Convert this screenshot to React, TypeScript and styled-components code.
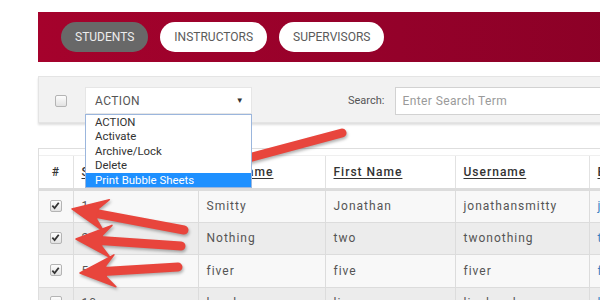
import React from 'react';
import styled, { createGlobalStyle } from 'styled-components';

const GlobalStyle = createGlobalStyle`
  html, body {
    margin: 0;
    padding: 0;
    background: #fff;
    overflow: hidden;
  }
  body {
    font-family: Roboto, 'Liberation Sans', sans-serif;
  }
`;

const Page = styled.div`
  position: relative;
  width: 760px;
  height: 300px;
  padding: 12px 0 0 38px;
  box-sizing: border-box;
`;

const Header = styled.div`
  display: flex;
  align-items: center;
  gap: 12px;
  height: 50px;
  padding-left: 23px;
  background: linear-gradient(90deg, #a5022c 0%, #94012a 50%, #860024 100%);
`;

const Pill = styled.button<{ $active?: boolean }>`
  height: 30px;
  padding: 0 14px;
  border: none;
  border-radius: 15px;
  font-family: Roboto, sans-serif;
  font-size: 12px;
  background: ${p => (p.$active ? '#686868' : '#fff')};
  color: ${p => (p.$active ? '#ededed' : '#5a5a5a')};
`;

const Toolbar = styled.div`
  display: flex;
  align-items: center;
  height: 47px;
  margin-top: 14px;
  padding-left: 16px;
  padding-top: 2px;
  background: #f2f2f2;
  border: 1px solid #e4e4e4;
  box-shadow: 0 2px 2px rgba(0, 0, 0, 0.13);
  box-sizing: border-box;
`;

const Box = styled.span<{ $checked?: boolean }>`
  display: inline-flex;
  align-items: center;
  justify-content: center;
  width: 12px;
  height: 12px;
  border: 1px solid #b4b4b4;
  border-radius: 2px;
  background: linear-gradient(#fdfdfd, #e2e2e2);
  box-sizing: border-box;
`;

const SelectWrap = styled.div`
  position: relative;
  margin-left: 18px;
  width: 167px;
`;

const Select = styled.div`
  display: flex;
  align-items: center;
  justify-content: space-between;
  height: 27px;
  padding: 0 7px 0 9px;
  background: #fff;
  border: 1px solid #e6e6e6;
  box-sizing: border-box;
  font-size: 12px;
  letter-spacing: 0.4px;
  color: #555;
`;

const Caret = styled.span`
  font-size: 8px;
  color: #333;
`;

const Options = styled.ul`
  position: absolute;
  top: 27px;
  left: 0;
  width: 167px;
  margin: 0;
  padding: 0;
  list-style: none;
  background: #fff;
  border: 1px solid #9bb6dd;
  box-sizing: border-box;
  z-index: 2;
`;

const Option = styled.li<{ $selected?: boolean }>`
  height: 14.4px;
  line-height: 14.4px;
  padding-left: 9px;
  font-size: 11.4px;
  color: ${p => (p.$selected ? '#fff' : '#333')};
  background: ${p => (p.$selected ? '#1e90ff' : 'transparent')};
`;

const SearchLabel = styled.span`
  margin-left: 96px;
  font-size: 11px;
  color: #555;
`;

const SearchInput = styled.input`
  margin-left: 11px;
  width: 260px;
  height: 28px;
  padding: 0 6px;
  border: 1px solid #d2d2d2;
  box-sizing: border-box;
  font-family: Roboto, sans-serif;
  font-size: 12px;
  letter-spacing: 0.4px;
  &::placeholder {
    color: #9a9a9a;
  }
`;

const TableWrap = styled.div`
  margin-top: 25px;
  padding-top: 6px;
  border-top: 1px solid #dedede;
  border-left: 1px solid #dedede;
`;

const Table = styled.table`
  border-collapse: collapse;
  table-layout: fixed;
  width: 722px;
  font-size: 12px;
  letter-spacing: 1px;
  color: #555;
`;

const Th = styled.th<{ $center?: boolean }>`
  height: 32px;
  padding: 0 8px;
  text-align: ${p => (p.$center ? 'center' : 'left')};
  font-weight: 500;
  color: #333;
  border-top: 1px solid #efefef;
  border-left: 1px solid #e2e2e2;
  border-bottom: 3px solid #dcdcdc;
  &:first-child {
    border-left: none;
  }
  span {
    text-decoration: underline;
    text-underline-offset: 2px;
  }
`;

const Row = styled.tr<{ $shade?: boolean }>`
  height: 32.5px;
  background: ${p => (p.$shade ? '#ececec' : '#f8f8f8')};
`;

const Td = styled.td<{ $center?: boolean; $link?: boolean }>`
  padding: 0 8px;
  text-align: ${p => (p.$center ? 'center' : 'left')};
  color: ${p => (p.$link ? '#3a7fc0' : '#555')};
  border-left: 1px solid #dcdcdc;
  border-bottom: 1px solid #dcdcdc;
  white-space: nowrap;
  overflow: hidden;
  &:first-child {
    border-left: none;
  }
`;

const ArrowLayer = styled.svg`
  position: absolute;
  top: 0;
  left: 0;
  width: 600px;
  height: 300px;
  pointer-events: none;
  filter: drop-shadow(1px 2px 1.5px rgba(0, 0, 0, 0.3));
`;

function Tick() {
  return (
    <svg width="9" height="9" viewBox="0 0 10 10">
      <path d="M1.5 5.2 L4 7.8 L8.6 2" fill="none" stroke="#333" strokeWidth="2" />
    </svg>
  );
}

function Arrow({ x1, y1, x2, y2 }: { x1: number; y1: number; x2: number; y2: number }) {
  const len = Math.hypot(x2 - x1, y2 - y1);
  const ux = (x2 - x1) / len;
  const uy = (y2 - y1) / len;
  const nx = -uy;
  const ny = ux;
  const L = 32;
  const W = 16;
  const at = (back: number, side: number) =>
    `${x2 - ux * back + nx * side},${y2 - uy * back + ny * side}`;
  const pts = [at(0, 0), at(L + 3, W), at(L - 6, 5.5), at(L - 6, -5.5), at(L + 3, -W)].join(' ');
  const sx = x2 - ux * (L - 8);
  const sy = y2 - uy * (L - 8);
  return (
    <g fill="#e8453c" stroke="#e8453c">
      <line x1={x1} y1={y1} x2={sx} y2={sy} strokeWidth="9" strokeLinecap="round" />
      <polygon points={pts} strokeWidth="1.5" strokeLinejoin="round" />
    </g>
  );
}

const rows = [
  { id: '1', last: 'Smitty', first: 'Jonathan', user: 'jonathansmitty', email: 'jonathan@example.com', checked: true },
  { id: '2', last: 'Nothing', first: 'two', user: 'twonothing', email: 'two@example.com', checked: true },
  { id: '5', last: 'fiver', first: 'five', user: 'fiver', email: 'five@example.com', checked: true },
  { id: '10', last: 'lonely', first: 'lisa', user: 'lisalonely', email: 'lisa@example.com', checked: false },
];

const actions = ['ACTION', 'Activate', 'Archive/Lock', 'Delete', 'Print Bubble Sheets'];

export default function App() {
  return (
    <>
      <GlobalStyle />
      <Page>
        <Header>
          <Pill $active>STUDENTS</Pill>
          <Pill>INSTRUCTORS</Pill>
          <Pill>SUPERVISORS</Pill>
        </Header>

        <Toolbar>
          <Box />
          <SelectWrap>
            <Select>
              ACTION
              <Caret>▼</Caret>
            </Select>
            <Options>
              {actions.map(a => (
                <Option key={a} $selected={a === 'Print Bubble Sheets'}>
                  {a}
                </Option>
              ))}
            </Options>
          </SelectWrap>
          <SearchLabel>Search:</SearchLabel>
          <SearchInput placeholder="Enter Search Term" />
        </Toolbar>

        <TableWrap>
          <Table>
            <colgroup>
              <col style={{ width: 34 }} />
              <col style={{ width: 125 }} />
              <col style={{ width: 127 }} />
              <col style={{ width: 130 }} />
              <col style={{ width: 134 }} />
              <col style={{ width: 172 }} />
            </colgroup>
            <thead>
              <tr>
                <Th $center>#</Th>
                <Th><span>Student ID</span></Th>
                <Th><span>Last Name</span></Th>
                <Th><span>First Name</span></Th>
                <Th><span>Username</span></Th>
                <Th><span>Email</span></Th>
              </tr>
            </thead>
            <tbody>
              {rows.map((r, i) => (
                <Row key={r.id} $shade={i % 2 === 1}>
                  <Td $center>
                    <Box $checked={r.checked}>{r.checked && <Tick />}</Box>
                  </Td>
                  <Td>{r.id}</Td>
                  <Td>{r.last}</Td>
                  <Td>{r.first}</Td>
                  <Td>{r.user}</Td>
                  <Td $link>{r.email}</Td>
                </Row>
              ))}
            </tbody>
          </Table>
        </TableWrap>

        <ArrowLayer viewBox="0 0 600 300">
          <Arrow x1={342} y1={133} x2={200} y2={171} />
          <Arrow x1={184} y1={230} x2={72} y2={209} />
          <Arrow x1={181} y1={246} x2={76} y2={239} />
          <Arrow x1={178} y1={267} x2={80} y2={273} />
        </ArrowLayer>
      </Page>
    </>
  );
}
